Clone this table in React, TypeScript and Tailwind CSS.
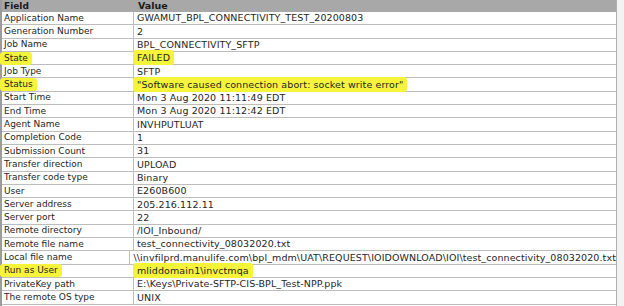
import React from "react";

type Row = { field: string; value: string; mark?: boolean };

const rows: Row[] = [
  { field: "Application Name", value: "GWAMUT_BPL_CONNECTIVITY_TEST_20200803" },
  { field: "Generation Number", value: "2" },
  { field: "Job Name", value: "BPL_CONNECTIVITY_SFTP" },
  { field: "State", value: "FAILED", mark: true },
  { field: "Job Type", value: "SFTP" },
  { field: "Status", value: "\"Software caused connection abort: socket write error\"", mark: true },
  { field: "Start Time", value: "Mon 3 Aug 2020 11:11:49 EDT" },
  { field: "End Time", value: "Mon 3 Aug 2020 11:12:42 EDT" },
  { field: "Agent Name", value: "INVHPUTLUAT" },
  { field: "Completion Code", value: "1" },
  { field: "Submission Count", value: "31" },
  { field: "Transfer direction", value: "UPLOAD" },
  { field: "Transfer code type", value: "Binary" },
  { field: "User", value: "E260B600" },
  { field: "Server address", value: "205.216.112.11" },
  { field: "Server port", value: "22" },
  { field: "Remote directory", value: "/IOI_Inbound/" },
  { field: "Remote file name", value: "test_connectivity_08032020.txt" },
  {
    field: "Local file name",
    value: "\\\\invfilprd.manulife.com\\bpl_mdm\\UAT\\REQUEST\\IOIDOWNLOAD\\IOI\\test_connectivity_08032020.txt",
  },
  { field: "Run as User", value: "mliddomain1\\invctmqa", mark: true },
  { field: "PrivateKey path", value: "E:\\Keys\\Private-SFTP-CIS-BPL_Test-NPP.ppk" },
  { field: "The remote OS type", value: "UNIX" },
];

function Cell({ text, mark }: { text: string; mark?: boolean }) {
  if (!mark) return <span>{text}</span>;
  return <span className="bg-[#f6f43a] px-[4px] -mx-[4px] py-[2px] rounded-[3px]">{text}</span>;
}

export default function App() {
  return (
    <div className="w-[624px] h-[306px] bg-white flex overflow-hidden text-[#262626] leading-none [font-family:'DejaVu_Sans',Verdana,sans-serif]">
      <div className="w-[617px] border-l-2 border-[#9c9c9c] border-r border-r-[#b0b0b0] flex flex-col">
        <div className="h-[12px] bg-[#a8a8a8] flex items-center font-bold text-[#1a1a1a]">
          <div className="w-[132px] pl-[2px] text-[9px]">Field</div>
          <div className="pl-[4px] text-[9.5px]">Value</div>
        </div>
        {rows.map((r) => (
          <div key={r.field} className="h-[13.3px] flex items-center border-b border-[#bdbdbd] whitespace-nowrap">
            <div className="w-[132px] pl-[2px] self-stretch flex items-center border-r border-[#bdbdbd] text-[9px]">
              <Cell text={r.field} mark={r.mark} />
            </div>
            <div className="pl-[3px] text-[9.5px] tracking-[0.1px]">
              <Cell text={r.value} mark={r.mark} />
            </div>
          </div>
        ))}
      </div>
      <div className="flex-1 bg-[#f3f3f3]" />
    </div>
  );
}
